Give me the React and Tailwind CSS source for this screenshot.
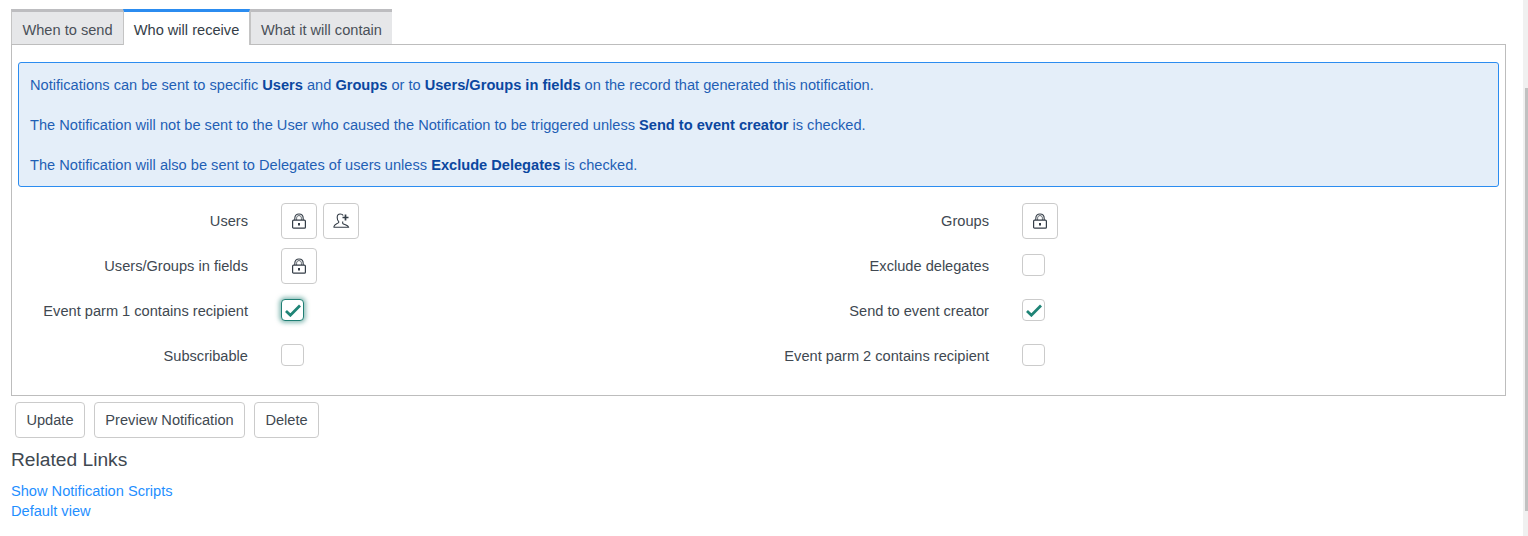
import React from 'react'

const LockIcon = () => (
  <svg width="16" height="16" viewBox="0 0 16 16" fill="none" stroke="#343d47" strokeWidth="1.1">
    <path d="M3.8 7V5.4C3.8 2.6 5.4 1 8 1s4.2 1.6 4.2 4.4V7" />
    <path d="M5.6 7V5.4C5.6 3.6 6.4 2.6 8 2.6s2.4 1 2.4 2.8V7" strokeWidth="0.8" />
    <rect x="1.6" y="7.2" width="12.8" height="8" rx="1" strokeWidth="1.2" />
    <path d="M8 10v2.6" strokeWidth="2" />
  </svg>
)

const AddUserIcon = () => (
  <svg width="17" height="16" viewBox="0 0 17 16" fill="none" stroke="#343d47" strokeWidth="1.1">
    <path d="M10.2 2.6C9.6 1.3 8.6 1 7.2 1 5.4 1 4.2 2.4 4.2 4.4c0 1.7.5 3 1.4 4 .3.4.2 1.1-.3 1.5-1.2.8-3.6 1.2-4.3 3.4v1h14.6c-.2-1.8-2.9-2.4-5.2-3.4-.9-.4-1-1.6-.4-2.4" />
    <path d="M12.5 1.5v6M9.5 4.5h6" strokeWidth="1.7" />
  </svg>
)

const IconButton = ({ children }) => (
  <button type="button" className="w-[36px] h-[36px] flex items-center justify-center bg-white border border-[#cbcbcb] rounded-[4px]">
    {children}
  </button>
)

const Checkbox = ({ checked, focused }) => (
  <span
    className={
      focused
        ? 'w-[23px] h-[22px] mb-[2px] flex items-center justify-center bg-white border border-[#1f7f74] rounded-[4px] shadow-[0_0_4px_2px_rgba(31,127,116,0.5)]'
        : 'w-[23px] h-[22px] mb-[2px] flex items-center justify-center bg-white border border-[#cbcbcb] rounded-[4px]'
    }
  >
    {checked && (
      <svg width="16" height="13" viewBox="0 0 16 13" fill="none" stroke="#1f8476" strokeWidth="2.8">
        <path d="M1 7l4.4 4.2L15 1.6" />
      </svg>
    )}
  </span>
)

const Field = ({ label, children }) => (
  <div className="flex items-center h-[45px]">
    <div className="w-[236px] pt-[2px] text-right">{label}</div>
    <div className="ml-[33px] flex items-center gap-[6px]">{children}</div>
  </div>
)

const Tab = ({ label, active, width }) => (
  <div
    className={
      active
        ? `${width} h-[36px] -mb-px pt-[5px] flex items-center justify-center bg-white border-t-[3px] border-t-[#2b8cf0] border-x border-x-[#c4c4c4] text-[#343d47]`
        : `${width} h-[35px] pt-[5px] flex items-center justify-center bg-[#e6e7e9] border-t-[3px] border-t-[#bdbdc0] border-l border-l-[#c4c4c4] text-[#4a5058]`
    }
  >
    {label}
  </div>
)

const FormButton = ({ label, width }) => (
  <button type="button" className={`${width} h-[36px] pt-[2px] bg-white border border-[#cbcbcb] rounded-[4px] text-[#404851]`}>
    {label}
  </button>
)

export default function App() {
  return (
    <div className="flex h-[536px] overflow-hidden bg-white font-['Liberation_Sans',Arial,sans-serif] text-[14.62px] text-[#404851]">
      <div className="w-[1523px] pl-[11px] pt-[9px]">
        {/* Tabs */}
        <div className="flex items-end">
          <Tab label="When to send" width="w-[112px]" />
          <Tab label="Who will receive" width="w-[127px]" active />
          <Tab label="What it will contain" width="w-[142px]" />
        </div>

        {/* Panel */}
        <div className="w-[1495px] h-[352px] border border-[#bdbdbd] pt-[17px] px-[6px]">
          <div className="h-[125px] bg-[#e4eef9] border border-[#2b8cf0] rounded-[3px] pl-[11px] pt-[12px] text-[#1f5fb5] flex flex-col gap-[20px] leading-[20px]">
            <p>
              Notifications can be sent to specific <b className="text-[#0b47a0]">Users</b> and <b className="text-[#0b47a0]">Groups</b> or to <b className="text-[#0b47a0]">Users/Groups in fields</b> on the record that generated this notification.
            </p>
            <p>
              The Notification will not be sent to the User who caused the Notification to be triggered unless <b className="text-[#0b47a0]">Send to event creator</b> is checked.
            </p>
            <p>
              The Notification will also be sent to Delegates of users unless <b className="text-[#0b47a0]">Exclude Delegates</b> is checked.
            </p>
          </div>

          <div className="grid grid-cols-[741px_1fr] -ml-[6px] mt-[11.5px]">
            <Field label="Users">
              <IconButton><LockIcon /></IconButton>
              <IconButton><AddUserIcon /></IconButton>
            </Field>
            <Field label="Groups">
              <IconButton><LockIcon /></IconButton>
            </Field>
            <Field label="Users/Groups in fields">
              <IconButton><LockIcon /></IconButton>
            </Field>
            <Field label="Exclude delegates">
              <Checkbox />
            </Field>
            <Field label="Event parm 1 contains recipient">
              <Checkbox checked focused />
            </Field>
            <Field label="Send to event creator">
              <Checkbox checked />
            </Field>
            <Field label="Subscribable">
              <Checkbox />
            </Field>
            <Field label="Event parm 2 contains recipient">
              <Checkbox />
            </Field>
          </div>
        </div>

        {/* Form actions */}
        <div className="flex gap-[9px] ml-[4px] mt-[6px]">
          <FormButton label="Update" width="w-[70px]" />
          <FormButton label="Preview Notification" width="w-[151px]" />
          <FormButton label="Delete" width="w-[65px]" />
        </div>

        {/* Related links */}
        <h2 className="mt-[11px] text-[19.2px] leading-[22px]">Related Links</h2>
        <div className="mt-[10px] flex flex-col text-[#1f8fff] leading-[20px]">
          <a href="#scripts">Show Notification Scripts</a>
          <a href="#default">Default view</a>
        </div>
      </div>

      {/* Scrollbar */}
      <div className="w-[5px] h-full bg-[#f0f0f0] pl-[2px] pt-[88px]">
        <div className="w-[3px] h-[423px] bg-[#c1c1c1]" />
      </div>
    </div>
  )
}
